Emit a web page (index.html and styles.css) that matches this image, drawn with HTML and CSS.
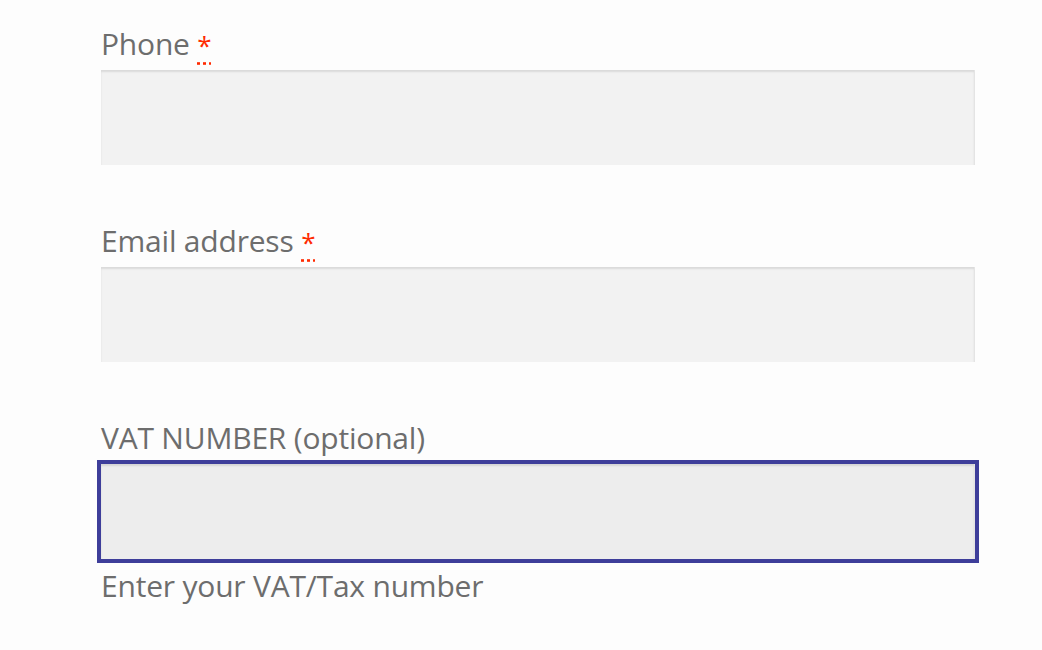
FILE: index.html
```html
<!DOCTYPE html>
<html lang="en">
<head>
<meta charset="UTF-8">
<meta name="viewport" content="width=device-width, initial-scale=1.0">
<title>Billing details</title>
<link rel="stylesheet" href="styles.css">
</head>
<body>

<form class="billing-form">
    <p class="form-row">
        <label for="billing_phone">Phone <abbr class="required" title="required">*</abbr></label>
        <input type="tel" id="billing_phone" class="input-text">
    </p>
    <p class="form-row">
        <label for="billing_email">Email address <abbr class="required" title="required">*</abbr></label>
        <input type="email" id="billing_email" class="input-text">
    </p>
    <p class="form-row">
        <label for="vat_number">VAT NUMBER <span class="optional">(optional)</span></label>
        <input type="text" id="vat_number" class="input-text focused">
        <span class="description">Enter your VAT/Tax number</span>
    </p>
</form>

</body>
</html>
```

FILE: styles.css
```css
body {
    font-family: "Open Sans", "Liberation Sans", sans-serif;
    margin: 0;
    padding: 0;
    background-color: #fdfdfd;
    color: #6d6d6d;
    letter-spacing: -0.2px;
}
.billing-form {
    width: 874px;
    padding: 26px 0 0 101px;
}
.form-row {
    margin: 0 0 58px;
}
label {
    display: block;
    font-size: 30px;
    line-height: 36px;
    margin-bottom: 8px;
}
.required {
    color: #ff2a00;
    font-size: 26px;
    line-height: 1;
    text-decoration: underline dotted;
    text-underline-offset: 7px;
    cursor: help;
}
.input-text {
    display: block;
    box-sizing: border-box;
    width: 874px;
    height: 95px;
    margin: 0;
    padding: 0 20px;
    border: 0;
    border-right: 1px solid #e4e4e4;
    background-color: #f2f2f2;
    box-shadow: inset 0 2px 2px rgba(0, 0, 0, 0.1);
    font-size: 30px;
}
.focused {
    background-color: #ededed;
    outline: 4px solid #3e3e9a;
}
.description {
    display: block;
    font-size: 30px;
    line-height: 36px;
    margin-top: 9px;
}
```
